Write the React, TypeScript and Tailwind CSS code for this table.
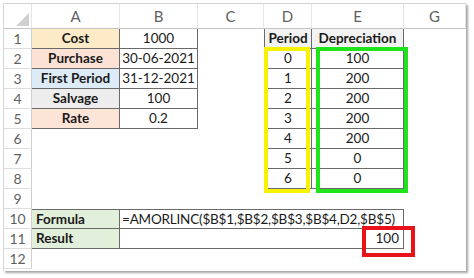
import React from "react";

const font = { fontFamily: "Lato, 'Open Sans', sans-serif" };

const grid =
  "grid grid-cols-[28px_88px_78px_66px_48px_92px_62px] grid-rows-[25px_repeat(12,20px)]";

const line = "border-[#6a6a6a]";

function RowNum({ n }: { n: number }) {
  return (
    <div className="flex items-center justify-center border-b border-r border-b-[#dedede] border-r-[#cfcfcf] text-[14px] text-[#5f5f5f]">
      {n}
    </div>
  );
}

function Empty() {
  return <div />;
}

const labels = [
  { text: "Cost", bg: "bg-[#fdeac6]", value: "1000" },
  { text: "Purchase", bg: "bg-[#fbe2d5]", value: "30-06-2021" },
  { text: "First Period", bg: "bg-[#ddebf7]", value: "31-12-2021" },
  { text: "Salvage", bg: "bg-[#ededed]", value: "100" },
  { text: "Rate", bg: "bg-[#fce4d6]", value: "0.2" },
];

const schedule = [
  ["0", "100"],
  ["1", "200"],
  ["2", "200"],
  ["3", "200"],
  ["4", "200"],
  ["5", "0"],
  ["6", "0"],
];

export default function App() {
  const rows: React.ReactNode[] = [];

  for (let r = 1; r <= 12; r++) {
    const cells: React.ReactNode[] = [<RowNum key="n" n={r} />];

    // columns A, B
    if (r <= 5) {
      const l = labels[r - 1];
      cells.push(
        <div key="a" className={`flex items-center justify-center border-r border-b ${line} ${l.bg} font-bold`}>
          {l.text}
        </div>,
        <div key="b" className={`flex items-center justify-center border-r border-b ${line}`}>
          {l.value}
        </div>
      );
    } else if (r === 10 || r === 11) {
      cells.push(
        <div
          key="a"
          className={`flex items-center pl-[4px] border-r border-b ${line} ${r === 10 ? "border-t" : ""} bg-[#e2efda] font-bold`}
        >
          {r === 10 ? "Formula" : "Result"}
        </div>,
        <div
          key="b"
          className={`col-span-4 flex items-center border-r border-b ${line} ${r === 10 ? "border-t pl-[2px] tracking-[-0.2px]" : "justify-end pr-[4px]"}`}
        >
          {r === 10 ? "=AMORLINC($B$1,$B$2,$B$3,$B$4,D2,$B$5)" : "100"}
        </div>
      );
    } else {
      cells.push(<Empty key="a" />, <Empty key="b" />);
    }

    if (r !== 10 && r !== 11) {
      // column C
      cells.push(<Empty key="c" />);

      // columns D, E
      if (r === 1) {
        cells.push(
          <div key="d" className={`flex items-center justify-center border-l border-r border-b ${line} bg-[#f2f2f2] font-bold`}>
            Period
          </div>,
          <div key="e" className={`flex items-center justify-center border-r border-b ${line} bg-[#f2f2f2] font-bold`}>
            Depreciation
          </div>
        );
      } else if (r <= 8) {
        const [p, d] = schedule[r - 2];
        cells.push(
          <div key="d" className={`flex items-center justify-center border-l border-r border-b ${line}`}>
            {p}
          </div>,
          <div key="e" className={`flex items-center justify-center border-r border-b ${line}`}>
            {d}
          </div>
        );
      } else {
        cells.push(<Empty key="d" />, <Empty key="e" />);
      }
    }

    // column G
    cells.push(<Empty key="g" />);

    rows.push(<React.Fragment key={r}>{cells}</React.Fragment>);
  }

  return (
    <div className="min-h-screen w-[474px] bg-white pt-[3px] pl-[3px]" style={font}>
      <div className="relative w-[463px] border-t border-l border-[#d6d6d6] bg-white shadow-[2px_2px_2px_rgba(0,0,0,0.35)] pb-[2px] text-[13.5px] text-[#1a1a1a]">
        <div className={grid}>
          {/* column headers */}
          <div className="relative border-b border-r border-b-[#c4c4c4] border-r-[#e4e4e4]">
            <svg className="absolute left-0 top-0" width="28" height="25" viewBox="0 0 28 25">
              <polygon points="12,22 25,22 25,9" fill="#d0d0d0" />
            </svg>
          </div>
          {["A", "B", "C", "D", "E", "G"].map((c) => (
            <div
              key={c}
              className="flex items-center justify-center border-b border-r border-b-[#c4c4c4] border-r-[#e6e6e6] text-[15px] text-[#5f5f5f]"
            >
              {c}
            </div>
          ))}
          {rows}
        </div>

        {/* highlight boxes */}
        <div className="pointer-events-none absolute left-[260px] top-[43px] h-[146px] w-[46px] border-[4px] border-[#f7f200]" />
        <div className="pointer-events-none absolute left-[312px] top-[43px] h-[146px] w-[92px] border-[4px] border-[#1fe41c]" />
        <div className="pointer-events-none absolute left-[358px] top-[222px] h-[31px] w-[53px] border-[4px] border-[#e8121a]" />
      </div>
    </div>
  );
}
